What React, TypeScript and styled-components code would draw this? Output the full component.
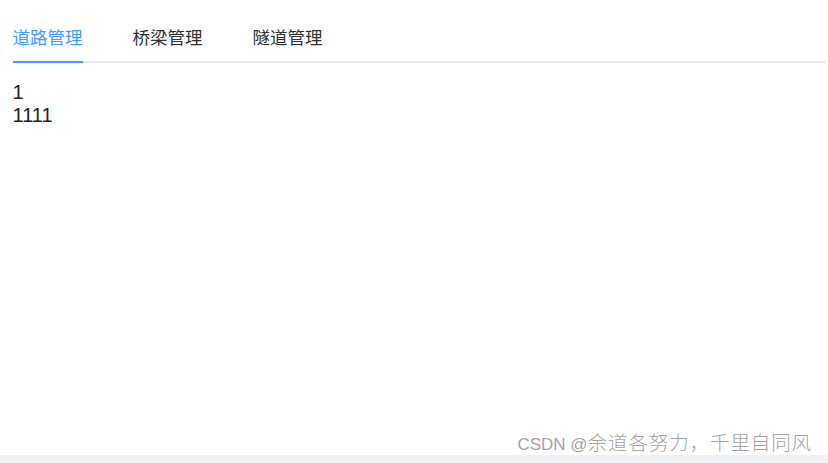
import { useState } from "react";
import styled, { createGlobalStyle } from "styled-components";

type TTab = {
  name: string;
  label: string;
};

const tabs: TTab[] = [
  { name: "road", label: "道路管理" },
  { name: "bridge", label: "桥梁管理" },
  { name: "tunnel", label: "隧道管理" },
];

const GlobalStyle = createGlobalStyle`
  html, body {
    margin: 0;
    padding: 0;
    height: 100%;
    background: #fff;
  }
  body {
    font-family: "Liberation Sans", "Noto Sans CJK SC", Arial, sans-serif;
  }
  #root {
    height: 100%;
  }
`;

const App = () => {
  const [active, setActive] = useState<string>("road");

  return (
    <Page>
      <GlobalStyle />
      <Main>
        <TabHeader>
          {tabs.map((tab) => (
            <TabItem
              key={tab.name}
              $active={active === tab.name}
              onClick={() => setActive(tab.name)}
            >
              {tab.label}
            </TabItem>
          ))}
        </TabHeader>
        {active === "road" && (
          <Content>
            <div>1</div>
            <div>1111</div>
          </Content>
        )}
      </Main>
      <Watermark>
        CSDN @<Han>余道各努力，千里自同风</Han>
      </Watermark>
      <BottomBar />
    </Page>
  );
};

const Page = styled.div`
  height: 100%;
  display: flex;
  flex-direction: column;
`;

const Main = styled.div`
  flex: 1;
  padding: 11.5px 1px 0 12.5px;
`;

const TabHeader = styled.div`
  display: flex;
  height: 49px;
  border-bottom: 2.5px solid #e4e7ed;
  margin-bottom: 18.75px;
`;

const TabItem = styled.div<{ $active: boolean }>`
  position: relative;
  display: flex;
  align-items: center;
  height: 49px;
  padding: 0 25px;
  font-size: 17.5px;
  color: ${({ $active }) => ($active ? "#409eff" : "#303133")};
  cursor: pointer;
  box-sizing: border-box;

  &:first-child {
    padding-left: 0;
  }

  &:last-child {
    padding-right: 0;
  }

  &::after {
    content: "";
    position: absolute;
    left: ${({ $active }) => ($active ? "0" : "25px")};
    right: 25px;
    bottom: -2.5px;
    height: 2.5px;
    background: #409eff;
    display: ${({ $active }) => ($active ? "block" : "none")};
  }
`;

const Content = styled.div`
  font-size: 20px;
  line-height: 23px;
  color: #222;
`;

const Watermark = styled.div`
  text-align: right;
  padding-right: 16px;
  font-size: 17px;
  line-height: 20px;
  color: #a3a3a3;
`;

const Han = styled.span`
  font-size: 19.5px;
  font-weight: 300;
  letter-spacing: 0.9px;
`;

const BottomBar = styled.div`
  height: 8.5px;
  background: #f0f1f5;
`;

export default App;
